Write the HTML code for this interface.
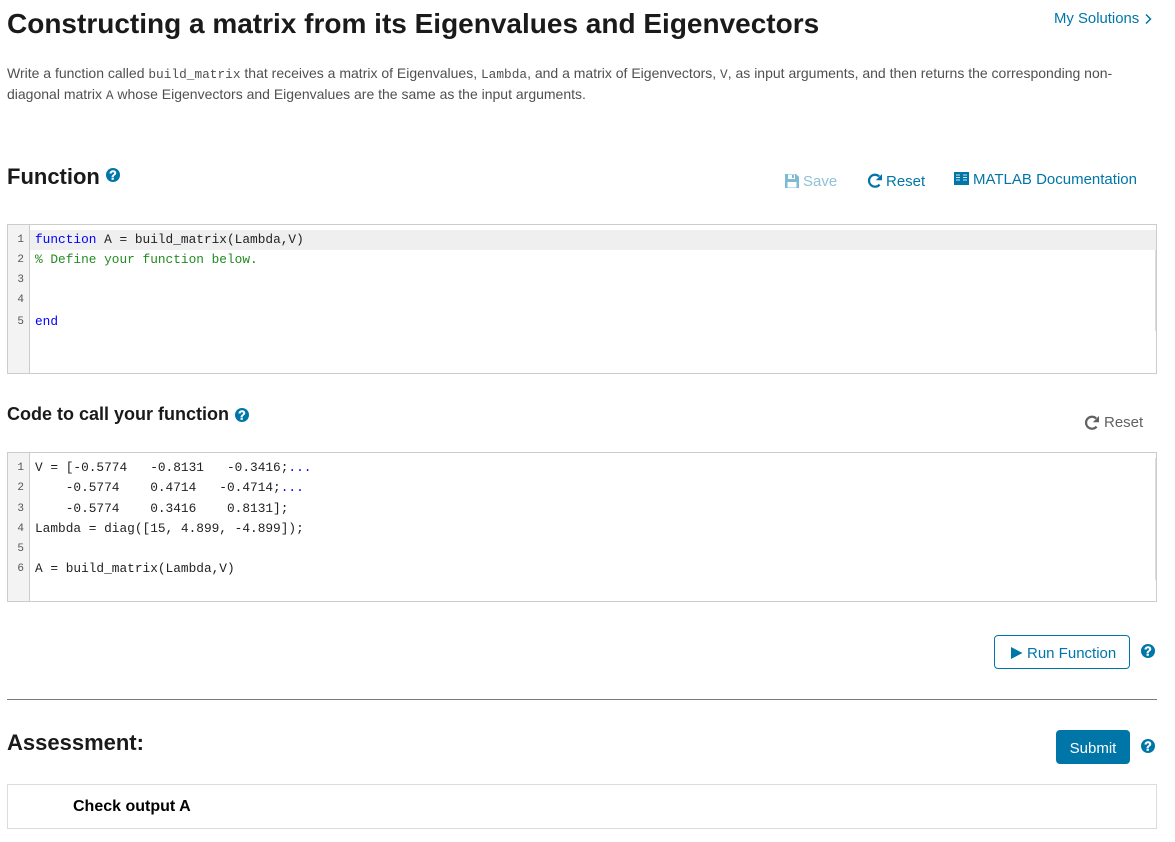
<!DOCTYPE html>
<html lang="en">
<head>
<meta charset="utf-8">
<title>Constructing a matrix from its Eigenvalues and Eigenvectors</title>
<style>
html,body{margin:0;padding:0;background:#fff;}
body{width:1175px;height:842px;position:relative;overflow:hidden;font-family:"Liberation Sans",Arial,sans-serif;color:#1a1a1a;}
.a{position:absolute;white-space:nowrap;}
a{color:#0076a8;text-decoration:none;}
h1,h2,h3{margin:0;font-weight:700;color:#1a1a1a;}
.desc{font-size:14px;line-height:21px;color:#505050;left:7px;}
.desc code,.mono{font-family:"Liberation Mono",monospace;}
.desc code{font-size:12.8px;}
.editor{position:absolute;left:7px;width:1148px;border:1px solid #ccc;background:#fff;}
.gutter{position:absolute;left:0;top:0;bottom:0;width:21px;background:#f3f3f3;border-right:1px solid #ccc;}
.ln{position:absolute;width:16px;text-align:right;left:0;font:11px/20px "Liberation Mono",monospace;color:#555;}
.cl{position:absolute;left:27px;font:12.8px/20px "Liberation Mono",monospace;white-space:pre;color:#222;}
.kw{color:#0000ff;}
.cm{color:#228b22;}
.tb{font-size:15px;}
.help{position:absolute;}
</style>
</head>
<body>
<h1 class="a" style="left:7px;top:7px;font-size:28px;line-height:34px;">Constructing a matrix from its Eigenvalues and Eigenvectors</h1>
<a class="a" style="left:1054px;top:10px;font-size:14.9px;line-height:18px;">My Solutions</a>
<svg class="a" style="left:1144px;top:14px" width="9" height="10" viewBox="0 0 9 10"><path d="M2 .5l4.500 4.500-4.500 4.500" fill="none" stroke="#0076a8" stroke-width="1.500"/></svg>

<div class="a desc" style="top:63px;">Write a function called <code>build_matrix</code> that receives a matrix of Eigenvalues, <code>Lambda</code>, and a matrix of Eigenvectors, <code>V</code>, as input arguments, and then returns the corresponding non-</div>
<div class="a desc" style="top:84px;">diagonal matrix <code>A</code> whose Eigenvectors and Eigenvalues are the same as the input arguments.</div>

<h2 class="a" style="left:7px;top:163px;font-size:22px;line-height:28px;">Function</h2>
<svg class="help" style="left:106px;top:168px" width="14" height="14" viewBox="0 0 14 14"><circle cx="7" cy="7" r="7" fill="#0076a8"/><text x="7" y="11.400" text-anchor="middle" font-family="Liberation Sans" font-weight="700" font-size="12.500" fill="#fff" stroke="#fff" stroke-width=".4">?</text></svg>

<svg class="a" style="left:784px;top:173px" width="16" height="16" viewBox="0 0 16 16"><path d="M1 1h11l3 3v11H1z" fill="#7fbad3"/><rect x="4" y="1.500" width="7" height="4.500" fill="#fff"/><rect x="8" y="2" width="2" height="3" fill="#7fbad3"/><rect x="3.500" y="9" width="9" height="5.500" fill="#fff"/></svg>
<div class="a tb" style="left:803px;top:173px;line-height:18px;color:#8fc1d8;">Save</div>

<svg class="a" style="left:867px;top:173px" width="16" height="16" viewBox="0 0 16 16"><path d="M12.600 11.600A6 6 0 1 1 12.200 3.400" fill="none" stroke="#0076a8" stroke-width="2.200"/><path d="M15 1v6.200H8.800z" fill="#0076a8"/></svg>
<a class="a tb" style="left:886px;top:173px;line-height:18px;">Reset</a>

<svg class="a" style="left:954px;top:172px" width="15" height="13" viewBox="0 0 15 13"><rect x="0" y="0" width="15" height="13" fill="#0076a8"/><path d="M2 3h4M2 5.500h4M2 8h4M9 3h4M9 5.500h4M9 8h4" stroke="#cfe5ef" stroke-width="1"/></svg>
<a class="a tb" style="left:973px;top:171px;line-height:18px;">MATLAB Documentation</a>

<div class="editor" style="top:224px;height:148px;">
  <div class="gutter"></div>
  <div style="position:absolute;left:22px;right:0;top:5px;height:20px;background:#efefef;"></div>
  <div style="position:absolute;right:0;top:25px;height:81px;width:1px;background:#ddd;"></div>
  <div class="ln" style="top:5px">1</div><div class="cl" style="top:5px"><span class="kw">function</span> A = build_matrix(Lambda,V)</div>
  <div class="ln" style="top:25px">2</div><div class="cl cm" style="top:25px">% Define your function below.</div>
  <div class="ln" style="top:45px">3</div>
  <div class="ln" style="top:65px">4</div>
  <div class="ln" style="top:87px">5</div><div class="cl kw" style="top:87px">end</div>
</div>

<h3 class="a" style="left:7px;top:403px;font-size:18px;line-height:22px;">Code to call your function</h3>
<svg class="help" style="left:235px;top:408px" width="14" height="14" viewBox="0 0 14 14"><circle cx="7" cy="7" r="7" fill="#0076a8"/><text x="7" y="11.400" text-anchor="middle" font-family="Liberation Sans" font-weight="700" font-size="12.500" fill="#fff" stroke="#fff" stroke-width=".4">?</text></svg>

<svg class="a" style="left:1084px;top:415px" width="16" height="16" viewBox="0 0 16 16"><path d="M12.600 11.600A6 6 0 1 1 12.200 3.400" fill="none" stroke="#616161" stroke-width="2.200"/><path d="M15 1v6.200H8.800z" fill="#616161"/></svg>
<div class="a tb" style="left:1104px;top:414px;line-height:18px;color:#616161;">Reset</div>

<div class="editor" style="top:452px;height:148px;">
  <div class="gutter"></div>
  <div style="position:absolute;right:0;top:5px;height:122px;width:1px;background:#ddd;"></div>
  <div class="ln" style="top:5px">1</div><div class="cl" style="top:5px">V = [-0.5774   -0.8131   -0.3416;<span class="kw">...</span></div>
  <div class="ln" style="top:25px">2</div><div class="cl" style="top:25px">    -0.5774    0.4714   -0.4714;<span class="kw">...</span></div>
  <div class="ln" style="top:46px">3</div><div class="cl" style="top:46px">    -0.5774    0.3416    0.8131];</div>
  <div class="ln" style="top:66px">4</div><div class="cl" style="top:66px">Lambda = diag([15, 4.899, -4.899]);</div>
  <div class="ln" style="top:86px">5</div>
  <div class="ln" style="top:106px">6</div><div class="cl" style="top:106px">A = build_matrix(Lambda,V)</div>
</div>

<div class="a" style="left:994px;top:635px;width:134px;height:32px;border:1px solid #0076a8;border-radius:4px;background:#fff;"></div>
<svg class="a" style="left:1011px;top:646px" width="12" height="14" viewBox="0 0 12 14"><path d="M0 1L11.500 7 0 13z" fill="#0076a8"/></svg>
<a class="a tb" style="left:1027px;top:645px;line-height:18px;">Run Function</a>
<svg class="help" style="left:1141px;top:644px" width="14" height="14" viewBox="0 0 14 14"><circle cx="7" cy="7" r="7" fill="#0076a8"/><text x="7" y="11.400" text-anchor="middle" font-family="Liberation Sans" font-weight="700" font-size="12.500" fill="#fff" stroke="#fff" stroke-width=".4">?</text></svg>

<div class="a" style="left:7px;top:699px;width:1150px;height:1px;background:#7a7a7a;"></div>

<h2 class="a" style="left:7px;top:729px;font-size:22px;line-height:28px;">Assessment:</h2>
<div class="a" style="left:1056px;top:730px;width:74px;height:34px;border-radius:4px;background:#0076a8;color:#fff;text-align:center;font-size:15px;line-height:37px;">Submit</div>
<svg class="help" style="left:1141px;top:739px" width="14" height="14" viewBox="0 0 14 14"><circle cx="7" cy="7" r="7" fill="#0076a8"/><text x="7" y="11.400" text-anchor="middle" font-family="Liberation Sans" font-weight="700" font-size="12.500" fill="#fff" stroke="#fff" stroke-width=".4">?</text></svg>

<div class="a" style="left:7px;top:784px;width:1148px;height:43px;border:1px solid #dcdcdc;background:#fff;"></div>
<div class="a" style="left:73px;top:797px;font-size:16px;line-height:20px;font-weight:700;color:#000;">Check output A</div>
</body>
</html>
